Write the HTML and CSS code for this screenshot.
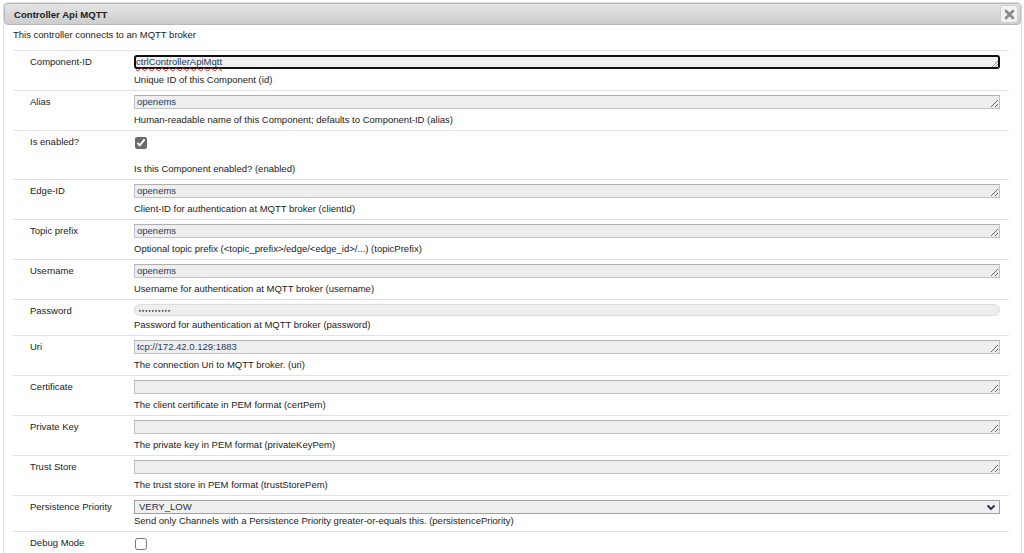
FILE: index.html
```html
<!DOCTYPE html>
<html>
<head>
<meta charset="utf-8">
<link rel="stylesheet" href="styles.css">
</head>
<body>
<div class="dialog">
  <div class="titlebar">
    <span class="title">Controller Api MQTT</span>
    <span class="close"><svg width="11" height="11" viewBox="0 0 11 11"><path d="M2 2 L9 9 M9 2 L2 9" stroke="#8a8a8a" stroke-width="2.6" stroke-linecap="round"/></svg></span>
  </div>
  <div class="content">
    <p class="desc">This controller connects to an MQTT broker</p>
    <div class="form">
      <div class="row">
        <div class="label">Component-ID</div>
        <div class="field">
          <div class="focusbox"><span class="spell">ctrlControllerApiMqtt</span><svg class="grip" width="6" height="6" viewBox="0 0 6 6"><path d="M6 0 L0 6 M6 3 L3 6" stroke="#777" stroke-width="0.8"/></svg></div>
          <div class="help">Unique ID of this Component (id)</div>
        </div>
      </div>
      <div class="row">
        <div class="label">Alias</div>
        <div class="field">
          <textarea class="ta" rows="1" spellcheck="false">openems</textarea>
          <div class="help">Human-readable name of this Component; defaults to Component-ID (alias)</div>
        </div>
      </div>
      <div class="row row-check">
        <div class="label">Is enabled?</div>
        <div class="field">
          <div class="checkwrap"><input type="checkbox" class="cb" checked></div>
          <div class="help">Is this Component enabled? (enabled)</div>
        </div>
      </div>
      <div class="row">
        <div class="label">Edge-ID</div>
        <div class="field">
          <textarea class="ta" rows="1" spellcheck="false">openems</textarea>
          <div class="help">Client-ID for authentication at MQTT broker (clientId)</div>
        </div>
      </div>
      <div class="row">
        <div class="label">Topic prefix</div>
        <div class="field">
          <textarea class="ta" rows="1" spellcheck="false">openems</textarea>
          <div class="help">Optional topic prefix (&lt;topic_prefix&gt;/edge/&lt;edge_id&gt;/...) (topicPrefix)</div>
        </div>
      </div>
      <div class="row">
        <div class="label">Username</div>
        <div class="field">
          <textarea class="ta" rows="1" spellcheck="false">openems</textarea>
          <div class="help">Username for authentication at MQTT broker (username)</div>
        </div>
      </div>
      <div class="row row-short">
        <div class="label">Password</div>
        <div class="field">
          <input type="password" class="pw" value="openems123">
          <div class="help help-tight">Password for authentication at MQTT broker (password)</div>
        </div>
      </div>
      <div class="row">
        <div class="label">Uri</div>
        <div class="field">
          <textarea class="ta" rows="1" spellcheck="false">tcp://172.42.0.129:1883</textarea>
          <div class="help">The connection Uri to MQTT broker. (uri)</div>
        </div>
      </div>
      <div class="row">
        <div class="label">Certificate</div>
        <div class="field">
          <textarea class="ta" rows="1" spellcheck="false"></textarea>
          <div class="help">The client certificate in PEM format (certPem)</div>
        </div>
      </div>
      <div class="row">
        <div class="label">Private Key</div>
        <div class="field">
          <textarea class="ta" rows="1" spellcheck="false"></textarea>
          <div class="help">The private key in PEM format (privateKeyPem)</div>
        </div>
      </div>
      <div class="row">
        <div class="label">Trust Store</div>
        <div class="field">
          <textarea class="ta" rows="1" spellcheck="false"></textarea>
          <div class="help">The trust store in PEM format (trustStorePem)</div>
        </div>
      </div>
      <div class="row row-short">
        <div class="label">Persistence Priority</div>
        <div class="field">
          <div class="selwrap">
            <select class="sel"><option>VERY_LOW</option></select>
            <svg class="chev" width="10" height="7" viewBox="0 0 10 7"><path d="M1.5 1.5 L5 5 L8.5 1.5" fill="none" stroke="#1e2f45" stroke-width="1.8"/></svg>
          </div>
          <div class="help help-none">Send only Channels with a Persistence Priority greater-or-equals this. (persistencePriority)</div>
        </div>
      </div>
      <div class="row row-last">
        <div class="label">Debug Mode</div>
        <div class="field">
          <div class="checkwrap"><input type="checkbox" class="cb"></div>
        </div>
      </div>
    </div>
  </div>
</div>
</body>
</html>
```
FILE: styles.css
```css
html, body {
  margin: 0;
  padding: 0;
  background: #ffffff;
}
body {
  font-family: "Liberation Sans", Arial, sans-serif;
  font-size: 9.5px;
  color: #222222;
}
.dialog {
  margin: 2px 2px 0 3px;
  border: 1px solid #dddddd;
  border-radius: 4px;
  background: #fff;
}
.titlebar {
  height: 20px;
  border: 1px solid #b8b8b8;
  border-radius: 4px;
  background: linear-gradient(#e4e4e4, #cdcdcd);
  display: flex;
  align-items: center;
  justify-content: space-between;
  padding: 0 2px 0 9px;
}
.title {
  font-weight: bold;
  font-size: 9.6px;
  color: #222;
}
.close {
  width: 16px;
  height: 16px;
  border: 1px solid #d0d0d0;
  border-radius: 3px;
  background: #f2f2f2;
  display: flex;
  align-items: center;
  justify-content: center;
}
.content {
  padding: 0 12px 0 9px;
}
.desc {
  margin: 3px 0 8px 0;
  line-height: 14px;
}
.form {
  display: flex;
  flex-direction: column;
}
.row {
  display: grid;
  grid-template-columns: 121px 1fr;
  border-top: 1px solid #e2e2e2;
  padding: 4px 9px 4px 0;
  height: 31px;
}
.row-check {
  height: 40px;
}
.row-short {
  height: 27px;
}
.row-last {
  height: 14px;
}
.label {
  padding-left: 17px;
  line-height: 14px;
}
.field {
  display: flex;
  flex-direction: column;
}
.ta {
  display: block;
  box-sizing: border-box;
  width: 100%;
  height: 14px;
  margin: 0;
  padding: 0 2px;
  border: 1px solid #c2c2c2;
  border-top-color: #b0b0b0;
  background: #eeeeee;
  font-family: "Liberation Sans", Arial, sans-serif;
  font-size: 9.5px;
  line-height: 12px;
  color: #1f3d5c;
  resize: vertical;
  overflow: hidden;
  outline: none;
}
.focusbox {
  position: relative;
  box-sizing: border-box;
  height: 14px;
  border: 2px solid #111111;
  border-radius: 3px;
  background: #f0f0f0;
  line-height: 9px;
  color: #1f3d5c;
  padding-left: 0;
}
.spell {
  text-decoration: underline wavy #e02020;
  text-decoration-thickness: 1px;
  text-underline-offset: 2px;
}
.grip {
  position: absolute;
  right: 0;
  bottom: 0;
}
.help {
  margin-top: 4px;
  line-height: 14px;
  white-space: nowrap;
}
.help-tight {
  margin-top: 2px;
}
.help-none {
  margin-top: 0;
}
.checkwrap {
  height: 23px;
}
.cb {
  margin: 2px 0 0 1px;
  width: 12px;
  height: 12px;
  accent-color: #6a6a6a;
}
.pw {
  display: block;
  box-sizing: border-box;
  width: 100%;
  height: 12px;
  margin: 0;
  padding: 0 3px;
  border: 1px solid #dcdcdc;
  border-radius: 6px;
  background: #eeeeee;
  font-family: "DejaVu Sans", sans-serif;
  font-size: 6px;
  letter-spacing: -0.3px;
  color: #333;
  outline: none;
}
.selwrap {
  position: relative;
  height: 14px;
}
.sel {
  appearance: none;
  -webkit-appearance: none;
  display: block;
  box-sizing: border-box;
  width: 100%;
  height: 14px;
  margin: 0;
  padding: 0 4px;
  border: 1px solid #a0a0a0;
  border-radius: 0;
  background: #efefef;
  font-family: "Liberation Sans", Arial, sans-serif;
  font-size: 9.5px;
  line-height: 12px;
  color: #1e2f45;
  outline: none;
}
.chev {
  position: absolute;
  right: 4px;
  top: 4px;
}
```
